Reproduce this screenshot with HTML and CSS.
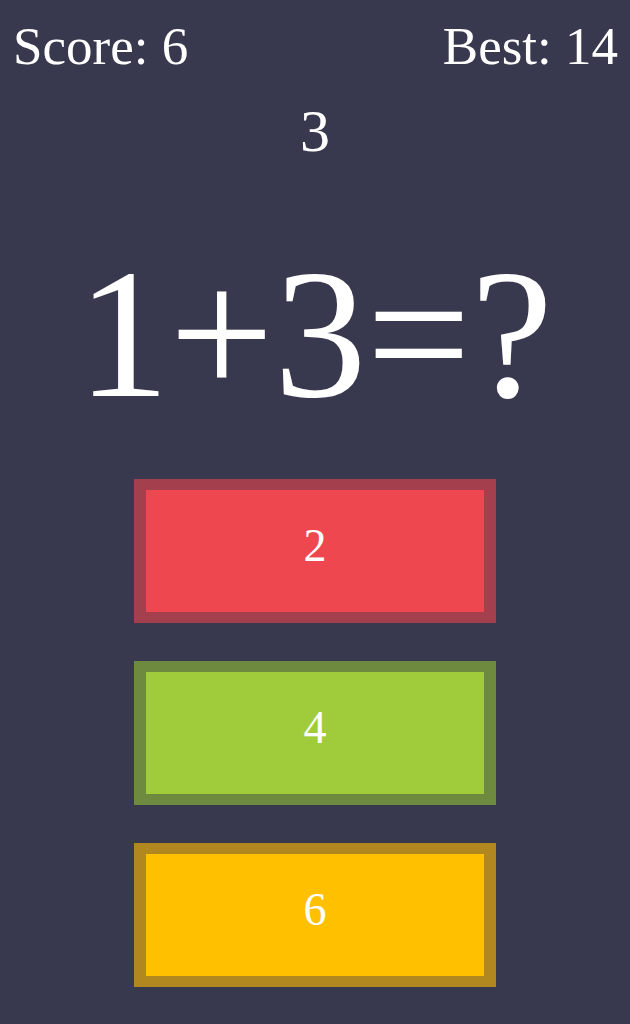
FILE: index.html
```html
<!DOCTYPE html>
<html lang="en">
<head>
<meta charset="utf-8">
<title>Quick Math</title>
<link rel="stylesheet" href="styles.css">
</head>
<body>
<main class="game">
  <header class="scores">
    <span class="score">Score: 6</span>
    <span class="best">Best: 14</span>
  </header>
  <div class="timer">3</div>
  <div class="question">1+3=?</div>
  <div class="answers">
    <button class="answer answer-red">2</button>
    <button class="answer answer-green">4</button>
    <button class="answer answer-yellow">6</button>
  </div>
</main>
</body>
</html>
```
FILE: styles.css
```css
html, body {
  margin: 0;
  padding: 0;
  height: 100%;
}

body {
  background: #38384e;
  color: #ffffff;
  font-family: "Liberation Serif", "Times New Roman", serif;
}

.game {
  display: flex;
  flex-direction: column;
  align-items: stretch;
}

.scores {
  display: flex;
  justify-content: space-between;
  padding: 15px 12px 0 13px;
  font-size: 53px;
  line-height: 62px;
}

.timer {
  margin-top: 19px;
  text-align: center;
  font-size: 60px;
  line-height: 70px;
}

.question {
  margin-top: 68px;
  text-align: center;
  font-size: 185px;
  line-height: 200px;
}

.answers {
  margin-top: 45px;
  display: flex;
  flex-direction: column;
  align-items: center;
  gap: 38px;
}

.answer {
  box-sizing: border-box;
  width: 362px;
  height: 144px;
  border-style: solid;
  border-width: 11px 12px;
  color: #ffffff;
  font-family: "Liberation Serif", "Times New Roman", serif;
  font-size: 46px;
  padding: 0 0 11px;
  cursor: pointer;
}

.answer-red {
  background: #ef4750;
  border-color: #a4404e;
}

.answer-green {
  background: #a0cc3c;
  border-color: #6d8a3f;
}

.answer-yellow {
  background: #ffc000;
  border-color: #b0881f;
}
```
